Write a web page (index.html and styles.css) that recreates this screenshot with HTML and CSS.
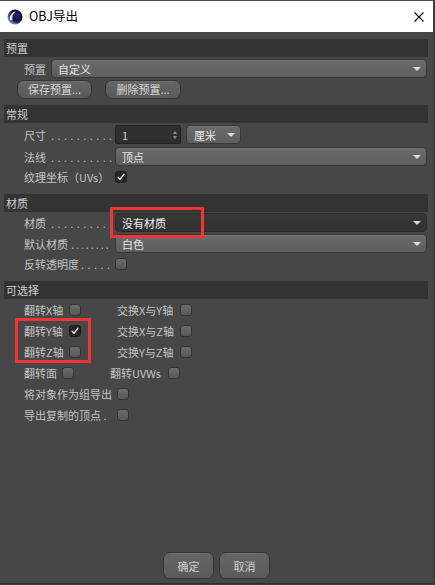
FILE: index.html
```html
<!DOCTYPE html>
<html lang="zh">
<head>
<meta charset="utf-8">
<title>OBJ导出</title>
<link rel="stylesheet" href="styles.css">
</head>
<body>
<div class="window">
  <div class="titlebar">
    <svg class="app-icon" viewBox="0 0 16 16" aria-hidden="true">
      <defs>
        <radialGradient id="sph" cx="0.62" cy="0.38" r="0.62">
          <stop offset="0" stop-color="#23286a"/>
          <stop offset="0.65" stop-color="#0b0e36"/>
          <stop offset="1" stop-color="#7c86cc"/>
        </radialGradient>
      </defs>
      <circle cx="8" cy="8" r="7.5" fill="url(#sph)"/>
      <path d="M3.2 11 C1.8 7 4.6 2.6 9.2 2.4 C6.4 3.8 4.6 7 5.6 11.6 Z" fill="#e6eaff"/>
    </svg>
    <span class="title">OBJ导出</span>
    <svg class="close" viewBox="0 0 10 10" aria-hidden="true">
      <path d="M0.5 0.5 L9.5 9.5 M9.5 0.5 L0.5 9.5" stroke="#000" stroke-width="1.1" fill="none"/>
    </svg>
  </div>

  <div class="content">
    <section class="group g-preset">
      <div class="ghead">预置</div>
      <div class="row r-preset">
        <span class="plabel">预置</span>
        <div class="select grow"><span>自定义</span><i class="arrow"></i></div>
      </div>
      <div class="row r-btns">
        <button class="btn b1">保存预置...</button>
        <button class="btn b2">删除预置...</button>
      </div>
    </section>

    <section class="group g-common">
      <div class="ghead">常规</div>
      <div class="row r-size">
        <span class="lbl">尺寸<span class="dots d10">..........</span></span>
        <div class="num"><span>1</span><i class="spin"><b class="up"></b><b class="down"></b></i></div>
        <div class="select unit"><span>厘米</span><i class="arrow"></i></div>
      </div>
      <div class="row r-normal">
        <span class="lbl">法线<span class="dots d10">..........</span></span>
        <div class="select grow"><span>顶点</span><i class="arrow"></i></div>
      </div>
      <div class="row r-check">
        <span class="lbl">纹理坐标（UVs）</span>
        <span class="cb on"><svg viewBox="0 0 12 12"><path d="M2.6 6.4 L4.8 8.8 L9.6 2.6" stroke="#f2f2f2" stroke-width="1.6" fill="none" stroke-linecap="round" stroke-linejoin="round"/></svg></span>
      </div>
    </section>

    <section class="group g-mat">
      <div class="ghead">材质</div>
      <div class="row r-mat">
        <span class="lbl">材质<span class="dots d10">..........</span></span>
        <div class="select dark grow"><span>没有材质</span><i class="arrow"></i></div>
      </div>
      <div class="row r-defmat">
        <span class="lbl">默认材质<span class="dots d8">........</span></span>
        <div class="select grow"><span>白色</span><i class="arrow"></i></div>
      </div>
      <div class="row r-check2">
        <span class="lbl">反转透明度<span class="dots d5">.....</span></span>
        <span class="cb"></span>
      </div>
    </section>

    <section class="group g-opt">
      <div class="ghead">可选择</div>
      <div class="orow">
        <span class="opt w93"><span class="ol w45">翻转X轴</span><span class="cb"></span></span>
        <span class="opt"><span class="ol w63">交换X与Y轴</span><span class="cb"></span></span>
      </div>
      <div class="orow">
        <span class="opt w93"><span class="ol w45">翻转Y轴</span><span class="cb on"><svg viewBox="0 0 12 12"><path d="M2.6 6.4 L4.8 8.8 L9.6 2.6" stroke="#f2f2f2" stroke-width="1.6" fill="none" stroke-linecap="round" stroke-linejoin="round"/></svg></span></span>
        <span class="opt"><span class="ol w63">交换X与Z轴</span><span class="cb"></span></span>
      </div>
      <div class="orow">
        <span class="opt w93"><span class="ol w45">翻转Z轴</span><span class="cb"></span></span>
        <span class="opt"><span class="ol w63">交换Y与Z轴</span><span class="cb"></span></span>
      </div>
      <div class="orow">
        <span class="opt w86"><span class="ol w38">翻转面</span><span class="cb"></span></span>
        <span class="opt"><span class="ol w58">翻转UVWs</span><span class="cb"></span></span>
      </div>
      <div class="orow">
        <span class="opt"><span class="ol w93">将对象作为组导出</span><span class="cb"></span></span>
      </div>
      <div class="orow">
        <span class="opt"><span class="ol w93">导出复制的顶点 .</span><span class="cb"></span></span>
      </div>
    </section>
  </div>

  <div class="footer">
    <button class="fbtn">确定</button>
    <button class="fbtn">取消</button>
  </div>

  <div class="mark m1"></div>
  <div class="mark m2"></div>
</div>
</body>
</html>
```

FILE: styles.css
```css
* { box-sizing: border-box; }
html, body { margin: 0; padding: 0; }
body {
  width: 435px;
  height: 585px;
  overflow: hidden;
  background: #3c3c3c;
  font-family: "Noto Sans CJK SC", "Noto Sans", sans-serif;
  font-size: 11px;
  color: #c4c4c4;
}

.window {
  position: relative;
  width: 434px;
  height: 584px;
  background: #474747;
  border-top: 1px solid #4a4a4a;
  border-right: 1px solid #3a3a3a;
  border-bottom: 1px solid #2f2f2f;
  display: flex;
  flex-direction: column;
}

/* title bar */
.titlebar {
  height: 31px;
  flex: none;
  background: #ffffff;
  display: flex;
  align-items: center;
  padding-left: 7px;
}
.app-icon { width: 16px; height: 16px; margin-right: 6px; }
.title { font-size: 12.5px; color: #000; line-height: 1; }
.close { width: 10px; height: 10px; margin-left: auto; margin-right: 9px; }

/* content */
.content {
  flex: 1;
  padding: 7px 5px 0 4px;
  display: flex;
  flex-direction: column;
}
.ghead {
  height: 18px;
  line-height: 18px;
  background: #333333;
  color: #cfcfcf;
  padding-left: 2px;
}
.row {
  display: flex;
  align-items: center;
  margin-right: 1px;
}

.g-preset { margin-bottom: 6px; }
.r-preset { height: 19px; margin-top: 2px; padding-left: 20px; }
.plabel { width: 27px; }
.r-btns { height: 19px; margin-top: 2px; padding-left: 13px; gap: 13px; }

.g-common { margin-bottom: 10px; }
.r-size { height: 19px; margin-top: 2px; padding-left: 20px; }
.r-normal { height: 19px; margin-top: 3px; padding-left: 20px; }
.r-check { height: 14px; margin-top: 4px; padding-left: 20px; }

.g-mat { margin-bottom: 10px; }
.r-mat { height: 19px; margin-top: 1px; padding-left: 20px; }
.r-defmat { height: 19px; margin-top: 2px; padding-left: 20px; }
.r-check2 { height: 14px; margin-top: 4px; padding-left: 20px; }

.lbl {
  width: 86px;
  margin-right: 5px;
  white-space: nowrap;
  flex: none;
  display: flex;
  align-items: baseline;
}
.dots { color: #b4b4b4; }
.dots.d10 { margin-left: 5px; letter-spacing: 3.4px; }
.dots.d8 { margin-left: 3px; letter-spacing: 1.9px; }
.dots.d5 { margin-left: 2px; letter-spacing: 3.4px; }

/* dropdowns */
.select {
  height: 19px;
  border: 1px solid #383838;
  border-radius: 4px;
  background: linear-gradient(#6b6b6b, #5e5e5e);
  box-shadow: inset 0 1px 0 rgba(255,255,255,0.07);
  color: #e6e6e6;
  display: flex;
  align-items: center;
  padding-left: 6px;
}
.select.grow { flex: 1; }
.select.dark {
  background: linear-gradient(#373737, #323232);
  border-color: #2a2a2a;
  box-shadow: none;
  color: #efefef;
}
.select.unit { width: 55px; margin-left: 5px; padding-left: 7px; }
.arrow {
  width: 0;
  height: 0;
  border-left: 4px solid transparent;
  border-right: 4px solid transparent;
  border-top: 4px solid #dadada;
  margin-left: auto;
  margin-right: 5px;
}

/* number field */
.num {
  width: 66px;
  height: 19px;
  border: 1px solid #222;
  border-radius: 2px;
  background: #2f2f2f;
  color: #d0d0d0;
  display: flex;
  align-items: center;
  padding-left: 6px;
}
.spin {
  margin-left: auto;
  margin-right: 3px;
  display: flex;
  flex-direction: column;
  gap: 2px;
}
.spin b { width: 0; height: 0; border-left: 2.5px solid transparent; border-right: 2.5px solid transparent; }
.spin .up { border-bottom: 3px solid #8c8c8c; }
.spin .down { border-top: 3px solid #8c8c8c; }

/* buttons */
.btn {
  height: 19px;
  border: 1px solid #343434;
  border-radius: 7px;
  background: linear-gradient(#666, #5a5a5a);
  box-shadow: inset 0 1px 0 rgba(255,255,255,0.06);
  color: #d6d6d6;
  font-family: inherit;
  font-size: 11px;
  padding: 0;
  line-height: 1;
}
.b1 { width: 75px; }
.b2 { width: 76px; }

/* checkboxes */
.cb {
  width: 12px;
  height: 12px;
  flex: none;
  border: 1px solid #333;
  border-radius: 3px;
  background: linear-gradient(#6c6c6c, #575757);
  display: inline-flex;
}
.cb.on { background: #272727; border-color: #1c1c1c; }
.cb svg { width: 10px; height: 10px; }

/* optional grid */
.orow {
  height: 21px;
  display: flex;
  align-items: center;
  padding-left: 20px;
}
.opt { display: flex; align-items: center; flex: none; }
.opt.w93 { width: 93px; }
.opt.w86 { width: 86px; }
.ol { white-space: nowrap; flex: none; }
.ol.w45 { width: 45px; }
.ol.w63 { width: 63px; }
.ol.w38 { width: 38px; }
.ol.w58 { width: 58px; }
.ol.w93 { width: 93px; }

/* footer */
.footer {
  flex: none;
  display: flex;
  justify-content: center;
  gap: 5px;
  padding-bottom: 4px;
}
.fbtn {
  width: 51px;
  height: 27px;
  border: 1px solid #343434;
  border-radius: 7px;
  background: linear-gradient(#666, #5b5b5b);
  box-shadow: inset 0 1px 0 rgba(255,255,255,0.06);
  color: #cfcfcf;
  font-family: inherit;
  font-size: 11px;
  padding: 0;
}

/* red annotation boxes */
.mark { position: absolute; border: 3px solid #f03535; pointer-events: none; }
.m1 { left: 110px; top: 206px; width: 94px; height: 31px; }
.m2 { left: 15px; top: 317px; width: 76px; height: 45px; }
```
